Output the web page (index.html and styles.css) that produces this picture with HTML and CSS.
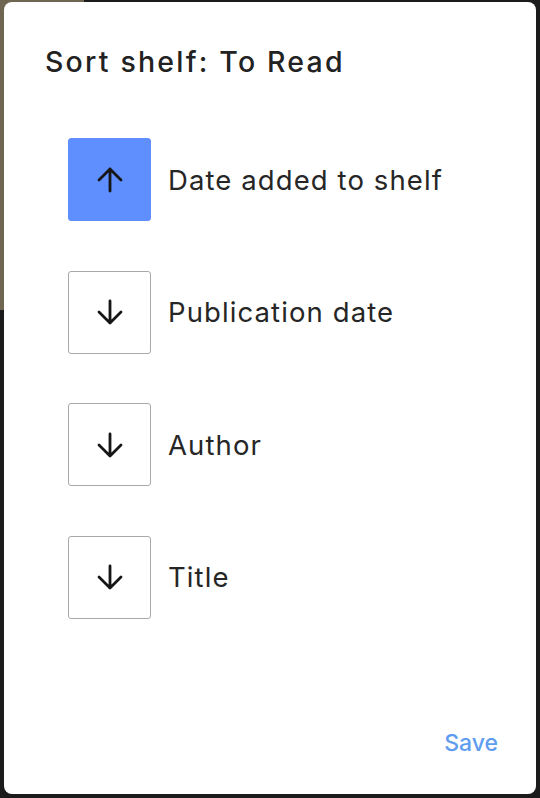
FILE: index.html
```html
<!DOCTYPE html>
<html lang="en">
<head>
    <meta charset="UTF-8">
    <meta name="viewport" content="width=device-width, initial-scale=1.0">
    <title>Sort shelf</title>
    <link rel="stylesheet" href="styles.css">
</head>
<body>
    <div class="page-behind"></div>

    <div class="dialog">
        <h2 class="dialog-title">Sort shelf: To Read</h2>

        <ul class="sort-list">
            <li class="sort-row">
                <button class="sort-toggle active">
                    <svg viewBox="0 0 26 26" width="26" height="26"><path d="M13 2v22M2 13L13 2l11 11"/></svg>
                </button>
                <span class="sort-label">Date added to shelf</span>
            </li>
            <li class="sort-row">
                <button class="sort-toggle">
                    <svg viewBox="0 0 26 26" width="26" height="26"><path d="M13 24V2M2 13l11 11 11-11"/></svg>
                </button>
                <span class="sort-label">Publication date</span>
            </li>
            <li class="sort-row">
                <button class="sort-toggle">
                    <svg viewBox="0 0 26 26" width="26" height="26"><path d="M13 24V2M2 13l11 11 11-11"/></svg>
                </button>
                <span class="sort-label">Author</span>
            </li>
            <li class="sort-row">
                <button class="sort-toggle">
                    <svg viewBox="0 0 26 26" width="26" height="26"><path d="M13 24V2M2 13l11 11 11-11"/></svg>
                </button>
                <span class="sort-label">Title</span>
            </li>
        </ul>

        <div class="dialog-footer">
            <button class="save-btn">Save</button>
        </div>
    </div>
</body>
</html>
```

FILE: styles.css
```css
html, body {
    margin: 0;
    height: 100%;
}

body {
    background: #1b1b1c;
    font-family: Inter, "Noto Sans", sans-serif;
    padding: 2px 4px 4px 4px;
    box-sizing: border-box;
}

/* bit of the shelf page peeking out under the modal */
.page-behind {
    position: absolute;
    top: 0;
    left: 0;
    width: 84px;
    height: 310px;
    background: #6e6650;
}

.dialog {
    position: relative;
    height: 792px;
    width: 532px;
    background: #fff;
    border-radius: 8px;
    display: flex;
    flex-direction: column;
    padding: 43px 38px 0 41px;
    box-sizing: border-box;
}

.dialog-title {
    margin: 0;
    font-size: 28.5px;
    line-height: 33px;
    font-weight: 500;
    letter-spacing: 2.2px;
    color: #222;
}

.sort-list {
    list-style: none;
    margin: 60px 0 0 23px;
    padding: 0;
    display: flex;
    flex-direction: column;
    gap: 49.5px;
}

.sort-row {
    display: flex;
    align-items: center;
    gap: 17px;
}

.sort-toggle {
    width: 83px;
    height: 83px;
    border: 1px solid #a9a9a9;
    border-radius: 3px;
    background: #fff;
    display: flex;
    align-items: center;
    justify-content: center;
    padding: 0;
    cursor: pointer;
}

.sort-toggle.active {
    background: #5f8eff;
    border-color: #5f8eff;
}

.sort-toggle svg {
    fill: none;
    stroke: #161616;
    stroke-width: 2.8;
    stroke-linecap: round;
    stroke-linejoin: round;
}

.sort-label {
    font-size: 27.5px;
    letter-spacing: 1.1px;
    color: #262626;
}

.dialog-footer {
    margin-top: auto;
    display: flex;
    justify-content: flex-end;
    padding-bottom: 37px;
}

.save-btn {
    border: none;
    background: none;
    padding: 0;
    font-family: inherit;
    font-size: 23px;
    font-weight: 500;
    color: #5e9cf0;
    cursor: pointer;
}
```
